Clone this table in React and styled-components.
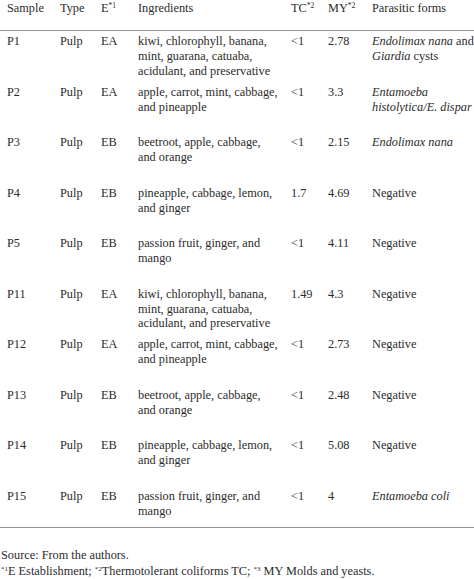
import React from 'react';
import styled, {createGlobalStyle} from 'styled-components';

const GlobalStyle = createGlobalStyle`
  html, body {
    margin: 0;
    padding: 0;
    background: #fff;
  }
  body {
    font-family: "Liberation Serif", "Times New Roman", serif;
    color: #2b2b2b;
  }
`;

const rows = [
  {
    id: 'P1', e: 'EA', tc: '<1', my: '2.78',
    ing: ['kiwi, chlorophyll, banana,', 'mint, guarana, catuaba,', 'acidulant, and preservative'],
    par: [
      <><i>Endolimax nana</i> and</>,
      <><i>Giardia</i> cysts</>,
    ],
  },
  {
    id: 'P2', e: 'EA', tc: '<1', my: '3.3',
    ing: ['apple, carrot, mint, cabbage,', 'and pineapple'],
    par: [<i>Entamoeba</i>, <i>histolytica/E. dispar</i>],
  },
  {
    id: 'P3', e: 'EB', tc: '<1', my: '2.15',
    ing: ['beetroot, apple, cabbage,', 'and orange'],
    par: [<i>Endolimax nana</i>],
  },
  {
    id: 'P4', e: 'EB', tc: '1.7', my: '4.69',
    ing: ['pineapple, cabbage, lemon,', 'and ginger'],
    par: ['Negative'],
  },
  {
    id: 'P5', e: 'EB', tc: '<1', my: '4.11',
    ing: ['passion fruit, ginger, and', 'mango'],
    par: ['Negative'],
  },
  {
    id: 'P11', e: 'EA', tc: '1.49', my: '4.3',
    ing: ['kiwi, chlorophyll, banana,', 'mint, guarana, catuaba,', 'acidulant, and preservative'],
    par: ['Negative'],
  },
  {
    id: 'P12', e: 'EA', tc: '<1', my: '2.73',
    ing: ['apple, carrot, mint, cabbage,', 'and pineapple'],
    par: ['Negative'],
  },
  {
    id: 'P13', e: 'EB', tc: '<1', my: '2.48',
    ing: ['beetroot, apple, cabbage,', 'and orange'],
    par: ['Negative'],
  },
  {
    id: 'P14', e: 'EB', tc: '<1', my: '5.08',
    ing: ['pineapple, cabbage, lemon,', 'and ginger'],
    par: ['Negative'],
  },
  {
    id: 'P15', e: 'EB', tc: '<1', my: '4',
    ing: ['passion fruit, ginger, and', 'mango'],
    par: [<i>Entamoeba coli</i>],
  },
];

const Lines = ({items}) => (
  <>
    {items.map((line, i) => (
      <Line key={i}>{line}</Line>
    ))}
  </>
);

const App = () => {
  return (
    <>
      <GlobalStyle />
      <Page>
        <Table>
          <HeadRow>
            <Cell>Sample</Cell>
            <Cell>Type</Cell>
            <Cell>E<Sup>*1</Sup></Cell>
            <Cell>Ingredients</Cell>
            <Cell>TC<Sup>*2</Sup></Cell>
            <Cell>MY<Sup>*2</Sup></Cell>
            <Cell>Parasitic forms</Cell>
          </HeadRow>
          {rows.map((row, i) => (
            <BodyRow key={row.id} $last={i === rows.length - 1}>
              <Cell>{row.id}</Cell>
              <Cell>Pulp</Cell>
              <Cell>{row.e}</Cell>
              <Cell><Lines items={row.ing} /></Cell>
              <Cell>{row.tc}</Cell>
              <Cell>{row.my}</Cell>
              <Cell><Lines items={row.par} /></Cell>
            </BodyRow>
          ))}
        </Table>
        <Notes>
          <Line>Source: From the authors.</Line>
          <Line>
            <NoteSup>*1</NoteSup>E Establishment; <NoteSup>*2</NoteSup>Thermotolerant coliforms TC; <NoteSup>*3</NoteSup> MY Molds and yeasts.
          </Line>
        </Notes>
      </Page>
    </>
  );
};

const Page = styled.div`
  width: 474px;
  height: 579px;
  overflow: hidden;
  font-size: 12.3px;
  line-height: 14.7px;
`;

const Table = styled.div`
  display: flex;
  flex-direction: column;
  border-bottom: 1.5px solid #939393;
`;

const gridCols = `53px 41px 37px 153px 37px 44px 102px`;

const HeadRow = styled.div`
  display: grid;
  grid-template-columns: ${gridCols};
  padding: 1px 0 0 7px;
  height: 31px;
  box-sizing: border-box;
  border-bottom: 1.5px solid #939393;
`;

const BodyRow = styled.div`
  display: grid;
  grid-template-columns: ${gridCols};
  align-items: start;
  padding: 3.4px 0 0 7px;
  height: ${p => (p.$last ? '41.5px' : '50.5px')};
  box-sizing: border-box;
`;

const Cell = styled.div`
  white-space: nowrap;
`;

const Line = styled.div`
  white-space: nowrap;
`;

const Sup = styled.sup`
  font-size: 7.5px;
  line-height: 0;
  vertical-align: 4px;
`;

const NoteSup = styled(Sup)`
  font-size: 7px;
  vertical-align: 4px;
`;

const Notes = styled.div`
  line-height: 15.5px;
  padding: 20px 0 0 1px;
`;

export default App;
